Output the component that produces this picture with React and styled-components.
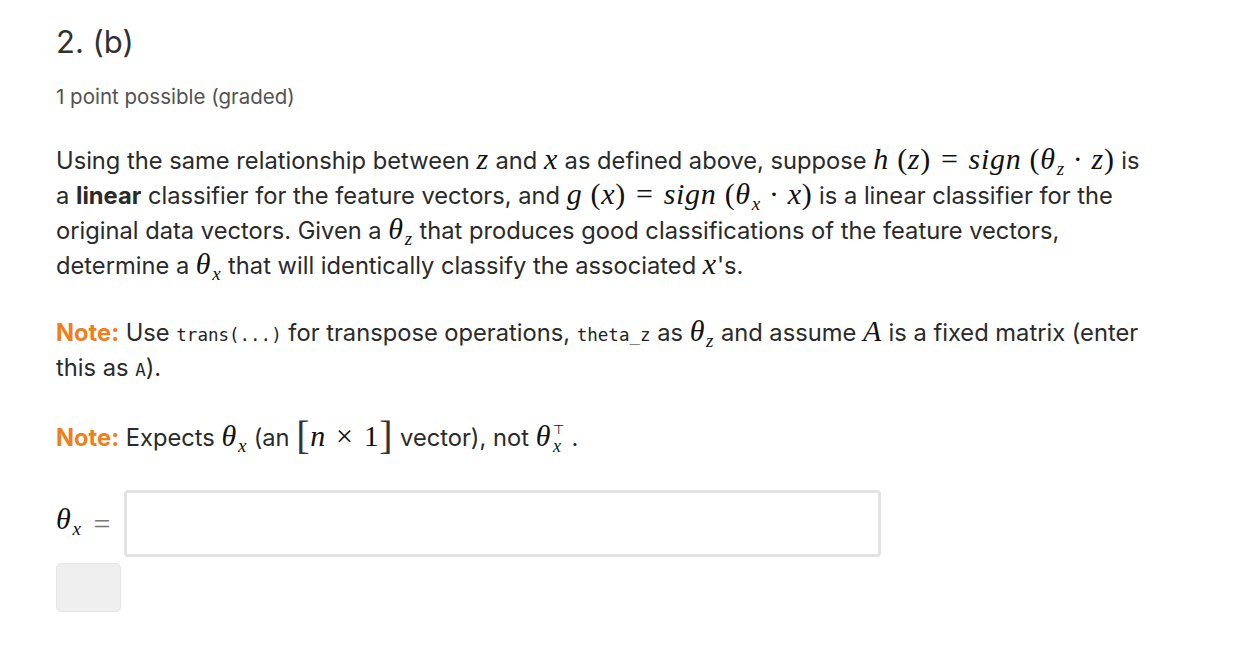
import React from 'react';
import styled, { createGlobalStyle } from 'styled-components';

const GlobalStyle = createGlobalStyle`
    html, body {
        margin: 0;
        padding: 0;
        background: #fff;
    }
    body {
        font-family: Inter, "Noto Sans", sans-serif;
        color: #313131;
    }
`;

const Page = styled.div`
    padding: 22px 56px 40px 56px;
    width: 1140px;
`;

const Heading = styled.h2`
    margin: 0;
    font-size: 31px;
    font-weight: 400;
    color: #313131;
    line-height: 40px;
`;

const Points = styled.div`
    margin-top: 22px;
    font-size: 20.5px;
    color: #525252;
    line-height: 26px;
`;

const Para = styled.p`
    margin: ${props => props.top || '0'} 0 0 0;
    font-size: 23.7px;
    line-height: 35px;
    color: #2a2a2a;
`;

const NoteLabel = styled.strong`
    color: #ee7f1b;
    font-weight: 700;
`;

const Code = styled.code`
    font-family: "DejaVu Sans Mono", monospace;
    font-size: 17.5px;
    line-height: 0;
    color: #222;
`;

const M = styled.span`
    font-family: "Liberation Serif", "DejaVu Serif", serif;
    font-style: ${props => props.upright ? 'normal' : 'italic'};
    font-size: ${props => props.upright ? '1em' : '30px'};
    letter-spacing: 0.7px;
    color: #111;
    white-space: nowrap;
    line-height: 0;
`;

const Op = styled.span`
    font-family: "Liberation Serif", "DejaVu Serif", serif;
    font-style: normal;
    padding: 0 ${props => props.gap || '10px'};
`;

const Sub = styled.sub`
    font-size: 19px;
    vertical-align: -6px;
    line-height: 0;
    margin-left: 1px;
`;

const Stack = styled.span`
    display: inline-flex;
    flex-direction: column;
    vertical-align: 12px;
    font-size: 18px;
    line-height: 16px;
    margin: -12px 0 -12px 2px;
`;

const Top = styled.span`
    font-style: normal;
    font-family: "DejaVu Sans", sans-serif;
    font-size: 13px;
    font-weight: 300;
`;

const Bracket = styled.span`
    font-style: normal;
    font-size: 40px;
    font-weight: 300;
    vertical-align: -3px;
    line-height: 0;
    color: #333;
`;

const AnswerRow = styled.div`
    display: flex;
    align-items: center;
    margin-top: 35px;
`;

const AnswerLabel = styled.div`
    width: 68px;
    display: flex;
    align-items: center;
    line-height: 1;
`;

const Eq = styled.span`
    font-family: "Liberation Serif", serif;
    font-size: 30px;
    color: #777;
    margin-left: 12px;
`;

const Input = styled.input`
    width: 757px;
    height: 67px;
    box-sizing: border-box;
    border: 3px solid #e3e3e3;
    border-radius: 4px;
    background: #fff;
    outline: none;
`;

const Submit = styled.button`
    display: block;
    margin-top: 6px;
    width: 65px;
    height: 49px;
    border: 1px solid #e6e6e6;
    border-radius: 5px;
    background: #efefef;
`;

const Theta = ({ sub }) => (
    <M>θ<Sub>{sub}</Sub></M>
);

export default function App() {
    return (
        <Page>
            <GlobalStyle />
            <Heading>2. (b)</Heading>
            <Points>1 point possible (graded)</Points>
            <Para top="33px">
                Using the same relationship between <M>z</M> and <M>x</M> as defined above, suppose{' '}
                <M>h<M upright> (</M>z<M upright>)</M><Op>=</Op>sign<M upright> (</M>θ<Sub>z</Sub><Op gap="8px">·</Op>z<M upright>)</M></M> is<br />
                a <b>linear</b> classifier for the feature vectors, and{' '}
                <M>g<M upright> (</M>x<M upright>)</M><Op>=</Op>sign<M upright> (</M>θ<Sub>x</Sub><Op gap="8px">·</Op>x<M upright>)</M></M> is a linear classifier for the<br />
                original data vectors. Given a <Theta sub="z" /> that produces good classifications of the feature vectors,<br />
                determine a <Theta sub="x" /> that will identically classify the associated <M>x</M>'s.
            </Para>
            <Para top="32px">
                <NoteLabel>Note:</NoteLabel> Use <Code>trans(...)</Code> for transpose operations, <Code>theta_z</Code> as <Theta sub="z" /> and assume <M>A</M> is a fixed matrix (enter<br />
                this as <Code>A</Code>).
            </Para>
            <Para top="35px">
                <NoteLabel>Note:</NoteLabel> Expects <Theta sub="x" /> (an <M><Bracket>[</Bracket>n<Op>×</Op><M upright>1</M><Bracket>]</Bracket></M> vector), not{' '}
                <M>θ<Stack><Top>⊤</Top><span>x</span></Stack></M> .
            </Para>
            <AnswerRow>
                <AnswerLabel>
                    <Theta sub="x" />
                    <Eq>=</Eq>
                </AnswerLabel>
                <Input type="text" />
            </AnswerRow>
            <Submit />
        </Page>
    );
}
